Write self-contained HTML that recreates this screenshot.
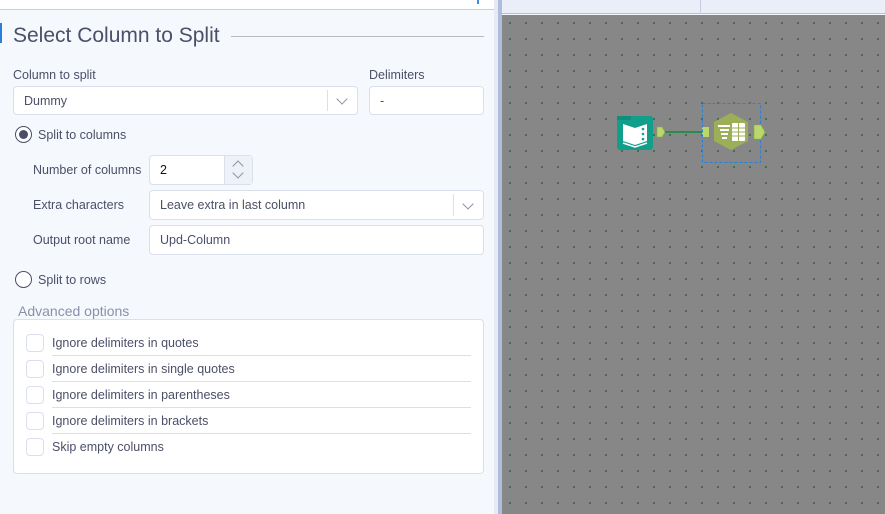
<!DOCTYPE html>
<html><head><style>
*{margin:0;padding:0;box-sizing:border-box}
body{width:885px;height:514px;overflow:hidden;position:relative;font-family:"Liberation Sans",sans-serif;color:#4b4f68;background:#f5f8fd}
.a{position:absolute}
.box{position:absolute;background:#fff;border:1px solid #d9dfec;border-radius:4px;font-size:12.5px;padding-left:10px;display:flex;align-items:center}
.lbl{position:absolute;font-size:12.5px;color:#4b4f68}
.cb{position:absolute;left:26px;width:18px;height:18px;border:1px solid #d9dfec;border-radius:4px;background:#fff}
.ct{position:absolute;left:52px;font-size:12.5px}
.ln{position:absolute;left:52px;width:419px;height:1px;background:#d9dfec}
.chev{position:absolute;width:8px;height:8px;border-right:1.3px solid #8a90aa;border-bottom:1.3px solid #8a90aa;transform:rotate(45deg)}
</style></head><body>
<div class="a" style="left:0;top:0;width:494px;height:10px;background:#fff;border-bottom:1px solid #c9cfdc"></div>
<div class="a" style="left:477px;top:0;width:2px;height:4px;background:#3a8fe0"></div>
<div class="a" style="left:494px;top:0;width:4px;height:514px;background:#e6eaf3"></div>
<div class="a" style="left:498px;top:0;width:4px;height:514px;background:#aebddc"></div>
<div class="a" style="left:0;top:23px;width:2px;height:20px;background:#2a7fd8"></div>
<div class="a" style="left:13px;top:24px;font-size:21px;color:#4b4f68">Select Column to Split</div>
<div class="a" style="left:231px;top:36px;width:253px;height:1px;background:#bbb"></div>

<div class="lbl" style="left:13px;top:68px">Column to split</div>
<div class="lbl" style="left:369px;top:68px">Delimiters</div>
<div class="box" style="left:13px;top:86px;width:345px;height:29px">Dummy</div>
<div class="a" style="left:327px;top:90px;width:1px;height:21px;background:#d9dfec"></div>
<div class="chev" style="left:338px;top:95px"></div>
<div class="box" style="left:369px;top:86px;width:115px;height:29px">-</div>

<div class="a" style="left:15px;top:126px;width:17px;height:17px;border:1.3px solid #4b4f68;border-radius:50%;background:#fff"></div>
<div class="a" style="left:19px;top:130px;width:9px;height:9px;border-radius:50%;background:#4b4f68"></div>
<div class="lbl" style="left:38px;top:128px">Split to columns</div>

<div class="lbl" style="left:33px;top:163px">Number of columns</div>
<div class="box" style="left:149px;top:155px;width:104px;height:30px;color:#111">2</div>
<div class="a" style="left:224px;top:156px;width:28px;height:28px;background:#eef1f8;border-left:1px solid #d9dfec"></div>
<div class="chev" style="left:234px;top:162px;transform:rotate(225deg)"></div>
<div class="chev" style="left:234px;top:169px"></div>
<div class="lbl" style="left:33px;top:198px">Extra characters</div>
<div class="box" style="left:149px;top:190px;width:335px;height:30px">Leave extra in last column</div>
<div class="a" style="left:453px;top:194px;width:1px;height:22px;background:#d9dfec"></div>
<div class="chev" style="left:464px;top:200px"></div>
<div class="lbl" style="left:33px;top:233px">Output root name</div>
<div class="box" style="left:149px;top:225px;width:335px;height:30px">Upd-Column</div>

<div class="a" style="left:15px;top:271px;width:17px;height:17px;border:1.3px solid #4b4f68;border-radius:50%;background:#fff"></div>
<div class="lbl" style="left:38px;top:273px">Split to rows</div>
<div class="a" style="left:18px;top:303px;font-size:14px;color:#8b90aa">Advanced options</div>
<div class="a" style="left:13px;top:319px;width:471px;height:155px;background:#fff;border:1px solid #d9dfec;border-radius:4px"></div>
<div class="cb" style="top:334px"></div><div class="ct" style="top:336px">Ignore delimiters in quotes</div><div class="ln" style="top:355px"></div>
<div class="cb" style="top:360px"></div><div class="ct" style="top:362px">Ignore delimiters in single quotes</div><div class="ln" style="top:381px"></div>
<div class="cb" style="top:386px"></div><div class="ct" style="top:388px">Ignore delimiters in parentheses</div><div class="ln" style="top:407px"></div>
<div class="cb" style="top:412px"></div><div class="ct" style="top:414px">Ignore delimiters in brackets</div><div class="ln" style="top:433px"></div>
<div class="cb" style="top:438px"></div><div class="ct" style="top:440px">Skip empty columns</div>

<div class="a" style="left:502px;top:0;width:383px;height:14px;background:#e9eef9;border-bottom:1px solid #b5c0d8"></div>
<div class="a" style="left:700px;top:0;width:1px;height:14px;background:#c5cde0"></div>
<div class="a" style="left:502px;top:15px;width:383px;height:499px;background-color:#878787;background-image:radial-gradient(circle,#2e6b4a 0.9px,transparent 1.1px);background-size:16px 16px;background-position:0px 0px"></div>

<svg class="a" style="left:502px;top:15px" width="383" height="499">
<rect x="115" y="101" width="36" height="34" rx="3" fill="#119e8a"/>
<rect x="115" y="101" width="14" height="4" fill="#0d8f7c"/>
<path d="M121 109 L133 113 L133 130 L121 126Z M145 109 L133 113 L133 130 L145 126Z" fill="#fff"/>
<path d="M121 128 L133 132 L145 128" stroke="#fff" stroke-width="1.5" fill="none"/>
<circle cx="141" cy="114" r="1.3" fill="#119e8a"/><circle cx="141" cy="119" r="1.3" fill="#119e8a"/><circle cx="141" cy="124" r="1.3" fill="#119e8a"/>
<path d="M155 112 h5 l3 5 l-3 5 h-5z" fill="#b8d86a" stroke="#8aa84a" stroke-width="0.6"/>
<line x1="163" y1="117" x2="201" y2="117" stroke="#2a8c4c" stroke-width="2"/>
<rect x="200" y="112" width="7" height="10" fill="#b8d86a"/>
<rect x="200.5" y="88.5" width="58" height="59" fill="none" stroke="#2a7fd8" stroke-dasharray="3,2"/>
<polygon points="229,98 246,107 246,126 229,135 212,126 212,107" fill="#9cae57"/>
<g fill="#fff"><rect x="216" y="110" width="12" height="2"/><rect x="218" y="114" width="9" height="2"/><rect x="219" y="118" width="7" height="2"/><rect x="220" y="122" width="5" height="2"/>
<rect x="230" y="108" width="13" height="18" rx="1"/></g>
<g stroke="#9cae57" stroke-width="1"><line x1="230" y1="113" x2="243" y2="113"/><line x1="230" y1="117" x2="243" y2="117"/><line x1="230" y1="121" x2="243" y2="121"/><line x1="236.5" y1="108" x2="236.5" y2="126"/></g>
<path d="M252 110 h7 l4 7 l-4 7 h-7z" fill="#b8d86a" stroke="#8aa84a" stroke-width="0.6"/>
</svg>
</body></html>
